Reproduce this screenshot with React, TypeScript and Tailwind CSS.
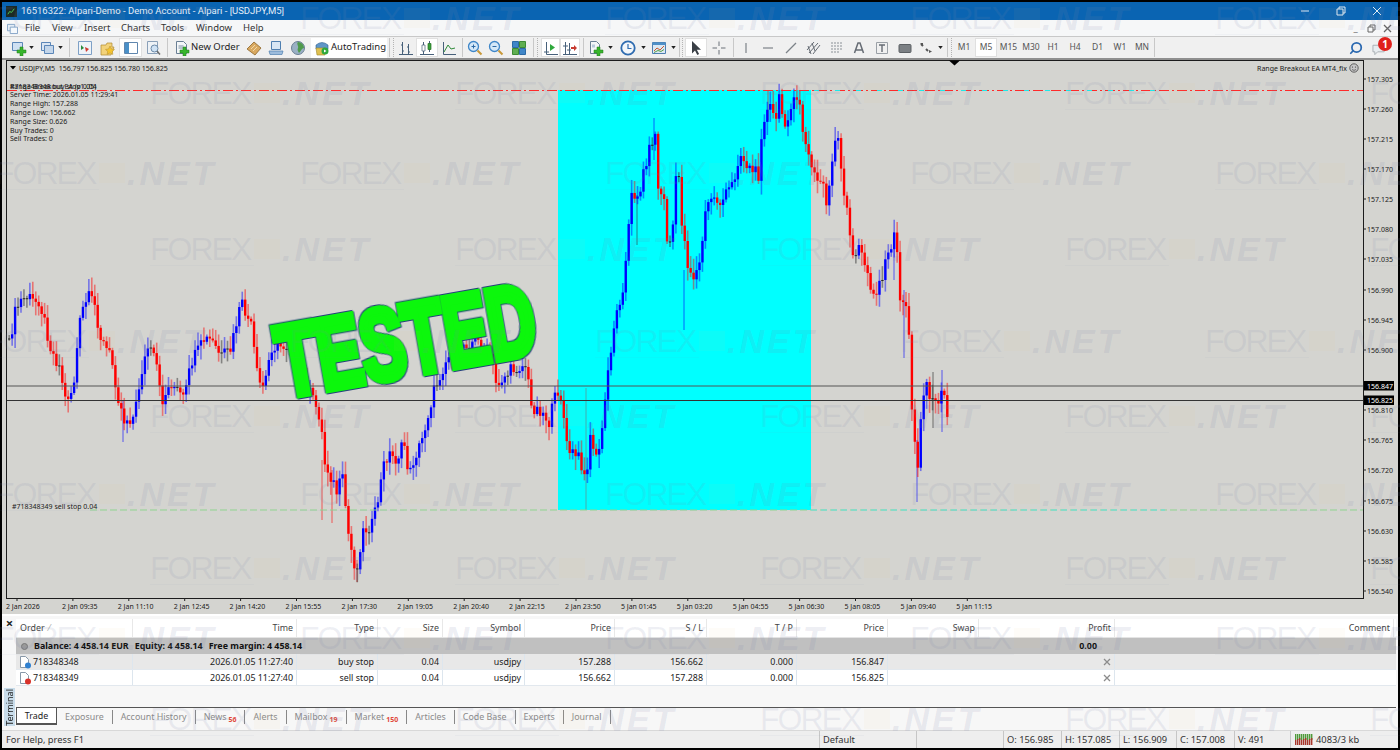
import type { ReactNode } from "react";
import { Search } from "lucide-react";

// close prices traced off the chart, in page pixels [x, y]
const path: [number, number][] = [
  [8, 345], [14, 312], [20, 300], [27, 297], [33, 302], [38, 300], [43, 320], [50, 350], [60, 370], [63, 400], [72, 390], [77, 337], [80, 313],
  [87, 297], [93, 303], [100, 340], [110, 357], [117, 397], [123, 420], [133, 417], [140, 373], [147, 347], [155, 363], [160, 403], [170, 383],
  [183, 400], [190, 363], [203, 340], [210, 340], [220, 357], [230, 350], [233, 333], [240, 303], [250, 327], [257, 383], [263, 387], [270, 347],
  [290, 345], [305, 385], [312, 400], [320, 420], [322, 460], [330, 477], [337, 497], [340, 470], [343, 493], [347, 533], [352, 560], [357, 573],
  [360, 533], [372, 523], [378, 493], [382, 467], [387, 453], [395, 460], [403, 443], [408, 477], [413, 458], [420, 443], [428, 410], [433, 390],
  [445, 360], [460, 345], [475, 340], [490, 355], [495, 385], [510, 370], [525, 365], [530, 407], [540, 410], [548, 423], [553, 400], [558, 387],
  [562, 413], [566, 450], [577, 457], [583, 470], [585, 490], [589, 430], [593, 460], [600, 443], [605, 387], [612, 330], [623, 280], [627, 233],
  [630, 197], [640, 190], [643, 167], [652, 137], [655, 135], [657, 187], [663, 202], [667, 253], [672, 223], [675, 177], [678, 177], [680, 217],
  [687, 267], [692, 277], [698, 267], [705, 208], [710, 197], [720, 203], [733, 180], [738, 153], [747, 167], [758, 175], [760, 135], [762, 120],
  [765, 113], [770, 107], [774, 123], [778, 100], [783, 122], [793, 103], [799, 103], [802, 135], [808, 160], [815, 180], [822, 183], [825, 202],
  [830, 177], [833, 142], [837, 143], [843, 200], [848, 217], [850, 253], [855, 258], [858, 247], [865, 267], [870, 287], [875, 295], [880, 277],
  [885, 263], [892, 237], [895, 237], [898, 293], [902, 303], [907, 307], [910, 407], [913, 433], [916, 483], [918, 422], [922, 400], [925, 377],
  [928, 400], [933, 400], [942, 395], [948, 420], [951, 400],
];

const rnd = (i: number) => {
  const v = Math.sin(i * 12.9898) * 43758.5453;
  return v - Math.floor(v);
};

function priceAt(x: number) {
  for (let i = 1; i < path.length; i++) {
    if (x <= path[i][0]) {
      const [x0, y0] = path[i - 1];
      const [x1, y1] = path[i];
      return y0 + ((y1 - y0) * (x - x0)) / (x1 - x0);
    }
  }
  return path[path.length - 1][1];
}

const jag = (i: number) => (rnd(i) - 0.5) * 13;

const candles = Array.from({ length: 319 }, (_, i) => {
  const x = 8 + i * 2.95;
  const close = priceAt(x) + jag(i);
  const open = i === 0 ? close : priceAt(x - 2.95) + jag(i - 1);
  const hi = Math.min(open, close) - 2 - rnd(i + 400) * 12;
  const lo = Math.max(open, close) + 2 + rnd(i + 800) * 12;
  return { x, open, close, hi, lo };
});

// the few long shadows which stand out in the picture
const longWicks: [number, number, number, string][] = [
  [123, 400, 442, "#0000ff"], [586, 388, 510, "#777777"], [684, 270, 330, "#0000ff"], [654, 118, 160, "#0000ff"], [637, 195, 245, "#333333"],
  [904, 290, 358, "#0000ff"], [917, 440, 502, "#0000ff"], [933, 372, 428, "#222222"], [942, 370, 432, "#0000ff"], [768, 90, 120, "#ff0000"],
  [322, 460, 520, "#ff0000"], [332, 470, 523, "#ff0000"], [357, 560, 582, "#ff0000"], [894, 232, 280, "#0000ff"],
];

const prices = [
  ["157.305", 79], ["157.260", 109], ["157.215", 139], ["157.170", 169], ["157.125", 199], ["157.080", 229], ["157.035", 259], ["156.990", 290],
  ["156.945", 320], ["156.900", 350], ["156.810", 410], ["156.765", 440], ["156.720", 470], ["156.675", 501], ["156.630", 531], ["156.585", 561], ["156.540", 591],
] as const;

const times = [
  "2 Jan 2026", "2 Jan 09:35", "2 Jan 11:10", "2 Jan 12:45", "2 Jan 14:20", "2 Jan 15:55", "2 Jan 17:30", "2 Jan 19:05", "2 Jan 20:40",
  "2 Jan 22:15", "2 Jan 23:50", "5 Jan 01:45", "5 Jan 03:20", "5 Jan 04:55", "5 Jan 06:30", "5 Jan 08:05", "5 Jan 09:40", "5 Jan 11:15",
];

const info = [
  ["Server Time: 2026.01.05 11:29:41", 97], ["Range High: 157.288", 106], ["Range Low: 156.662", 115],
  ["Range Size: 0.626", 124], ["Buy Trades: 0", 133], ["Sell Trades: 0", 141],
] as const;

function Chart() {
  return (
    <svg viewBox="2 60 1396 554" className="block w-[1396px] h-[554px]" fontFamily='"Noto Sans", sans-serif' fontSize="7" fill="#1a1a1a">
      <rect x="558" y="90" width="253" height="420" fill="#00ffff" />
      {longWicks.map(([x, a, b, c], i) => (
        <line key={i} x1={x} x2={x} y1={a} y2={b} stroke={c} strokeOpacity="0.6" />
      ))}
      {candles.map((c, i) => {
        const up = c.close < c.open;
        const flat = Math.abs(c.close - c.open) < 1;
        const color = flat ? "#222222" : up ? "#0000ff" : "#ff0000";
        return (
          <g key={i}>
            <line x1={c.x + 1.2} x2={c.x + 1.2} y1={c.hi} y2={c.lo} stroke={color} strokeOpacity="0.45" strokeWidth="1.600" />
            <rect x={c.x} y={Math.min(c.open, c.close)} width="2.400" height={Math.max(1, Math.abs(c.close - c.open))} fill={color} />
          </g>
        );
      })}
      <line x1="7" x2="1363" y1="386" y2="386" stroke="#555" />
      <line x1="7" x2="1363" y1="400.5" y2="400.5" stroke="#333" />
      <line x1="7" x2="1363" y1="90.5" y2="90.5" stroke="#ff2a2a" strokeDasharray="10 3 2 3" />
      <line x1="811" x2="1165" y1="90.5" y2="90.5" stroke="#22e6e6" strokeDasharray="5 16" strokeDashoffset="-3" />
      <line x1="90" x2="1363" y1="510" y2="510" stroke="#8fd48f" strokeDasharray="7 3" />
      <line x1="811" x2="1165" y1="510" y2="510" stroke="#60e0e0" strokeDasharray="6 4" />
      <rect x="6.5" y="60.5" width="1357" height="538" fill="none" stroke="#1c1c1c" />
      <path d="M10 66h6l-3 3.500z" fill="#000" />
      <path d="M949 60.500h11l-5.500 5z" fill="#000" />
      <text x="19" y="71">USDJPY,M5&nbsp; 156.797 156.825 156.780 156.825</text>
      <text x="10" y="88.500">#718348348 buy stop 0.04</text>
      <text x="10" y="88.500">Range Breakout EA (v1.05)</text>
      {info.map(([t, y]) => (
        <text key={t} x="10" y={y}>{t}</text>
      ))}
      <text x="12" y="509">#718348349 sell stop 0.04</text>
      <text x="1347" y="71" textAnchor="end">Range Breakout EA MT4_fix</text>
      <circle cx="1354" cy="68" r="4.200" fill="#c8c8c8" stroke="#444" strokeWidth="0.800" />
      <circle cx="1352.500" cy="67" r="0.600" fill="#333" />
      <circle cx="1355.500" cy="67" r="0.600" fill="#333" />
      <path d="M1352 69.500q2 1.800 4 0" fill="none" stroke="#333" strokeWidth="0.600" />
      {prices.map(([p, y]) => (
        <g key={p}>
          <line x1="1363" x2="1366" y1={y} y2={y} stroke="#222" />
          <text x="1367" y={y + 3}>{p}</text>
        </g>
      ))}
      <rect x="1364" y="381" width="30" height="9.500" fill="#000" />
      <text x="1367" y="388.500" fill="#fff">156.847</text>
      <rect x="1364" y="395.500" width="30" height="9.500" fill="#000" />
      <text x="1367" y="403" fill="#fff">156.825</text>
      {times.map((t, i) => {
        const x = 6 + i * 55.9;
        return (
          <g key={t}>
            <line x1={x + 11} x2={x + 11} y1="598" y2="601" stroke="#222" />
            <text x={x} y="609">{t}</text>
          </g>
        );
      })}
    </svg>
  );
}

const marks = [
  "h-[75px] ml-[-5px]", "h-[80px] ml-[150px]", "h-[76px] ml-[-5px]", "h-[92px] ml-[150px]", "h-[75px] ml-[-15px]",
  "h-[78px] ml-[150px]", "h-[74px] ml-[-5px]", "h-[70px] ml-[150px]", "h-[81px] ml-[-5px]", "h-[40px] ml-[150px]",
];

// the site's mark, tiled all over the picture
function Watermark() {
  return (
    <div className="absolute inset-0 z-30 pointer-events-none overflow-hidden pt-[2px] flex flex-col font-['Liberation_Sans',sans-serif]">
      {marks.map((m, r) => (
        <div key={r} className={`flex shrink-0 ${m}`}>
          {[0, 1, 2, 3, 4].map((c) => (
            <div key={c} className="flex items-center w-[305px] shrink-0 h-[32px]">
              <span className="w-[104px] text-[32px] leading-none tracking-[-2px] text-[#7c84a8]/12 border-b border-[#7c84a8]/5">FOREX</span>
              <span className="w-[26px] h-[20px] mr-[2px] bg-[#e6c070]/5" />
              <span className="text-[34px] leading-none font-bold italic tracking-[3px] text-[#7c84a8]/15">.NET</span>
            </div>
          ))}
        </div>
      ))}
    </div>
  );
}

function Tested() {
  return (
    <div className="absolute z-20 left-[142px] top-[230px] w-[524px] text-center text-[100px] leading-none font-bold text-[#0cf70c] font-['Liberation_Sans',sans-serif] [-webkit-text-stroke:8px_#0cf70c] [transform:rotate(-10deg)_scaleX(0.66)] [filter:drop-shadow(1px_1px_0_#24407c)_drop-shadow(-1px_-1px_0_#24407c)]">
      TESTED
    </div>
  );
}

const Ico = ({ children }: { children: ReactNode }) => (
  <svg viewBox="0 0 16 16" className="w-[16px] h-[16px]" fill="none">{children}</svg>
);

const Plus = () => <path d="M9 7h3v3h3v3h-3v3H9v-3H6v-3h3z" fill="#38b52c" stroke="#1e7a18" strokeWidth="0.500" />;
const Win = () => <path d="M1.500 2.500h10v8h-10z" fill="#cfe0f2" stroke="#5b86b8" />;

const icons = {
  newChart: <Ico><Win /><Plus /></Ico>,
  profiles: <Ico><path d="M1.500 2.500h9v8h-9z" fill="#dbe6f3" stroke="#5b86b8" /><path d="M4.500 5.500h9v8h-9z" fill="#c4d6ea" stroke="#5b86b8" /></Ico>,
  market: <Ico><path d="M1.500 1.500h13v13h-13z" fill="#eef3f8" stroke="#7ea0c6" /><path d="M4 5l3 3-3 2z" fill="#2a8a3a" /><path d="M8 7l4 2-3 3z" fill="#d03a30" /></Ico>,
  navigator: <Ico><path d="M1 5h5l1-2h5v4h2l-3 8H1z" fill="#f2d27a" stroke="#b08a30" strokeWidth="0.700" /><path d="M10 6l1.500 3 3 .4-2.200 2 .6 3-2.900-1.500-2.900 1.500.6-3-2.200-2 3-.4z" fill="#f4c430" stroke="#b08a30" strokeWidth="0.500" /></Ico>,
  panel: <Ico><path d="M1.500 2.500h13v11h-13z" fill="#fff" stroke="#5f86ae" /><path d="M2 3h4v10H2z" fill="#4a90c8" /></Ico>,
  tester: <Ico><path d="M2.500 1.500h10v12h-10z" fill="#eef2f6" stroke="#8aa0b8" /><circle cx="9.500" cy="8.500" r="3.500" fill="#cfe2f4" stroke="#6c8aa8" /><path d="M12 11l3 3.500" stroke="#6c6c6c" strokeWidth="1.500" /></Ico>,
  order: <Ico><path d="M2.500 1.500h7l3 3v9h-10z" fill="#f4f6f8" stroke="#6a7f94" /><path d="M4.500 6h5M4.500 8h5" stroke="#7c90a6" /><Plus /></Ico>,
  book: <Ico><path d="M1 9l7-7 7 6-6 7z" fill="#d8a860" stroke="#8c6428" strokeWidth="0.800" /><path d="M5 9l4-4M7 11l4-4" stroke="#f0d8a8" /></Ico>,
  monitor: <Ico><path d="M3.500 1.500h9v8h-9z" fill="#d8e6f4" stroke="#4f7fb0" /><path d="M1 11h14l-1 3.500H2z" fill="#9dbcdc" stroke="#4f7fb0" strokeWidth="0.700" /></Ico>,
  globe: <Ico><circle cx="8" cy="8" r="6.500" fill="#9ab0c4" stroke="#6a7f94" /><path d="M8 2a6 6 0 0 1 6 6c-2 0-3 3-5 5-1-2-2-3-1-5S6 4 8 2z" fill="#4f9a4c" /></Ico>,
  auto: <Ico><path d="M2 5q6-5 12 0v4H2z" fill="#5f96c8" stroke="#2d5f90" strokeWidth="0.600" /><path d="M2 8h9v7H3z" fill="#e0c050" stroke="#a08828" strokeWidth="0.600" /><circle cx="11" cy="11" r="3.500" fill="#2fa83c" /><path d="M10 9.500l2.500 1.500-2.500 1.500z" fill="#fff" /></Ico>,
  bars: <Ico><path d="M4.500 2v12M3 5h1.500M4.500 11H6M10.500 4v10M9 7h1.500M10.500 12H12M1 14.500h14" stroke="#47607a" /></Ico>,
  candle: <Ico><path d="M4.500 2v12M1 14.500h14M10.500 1v11" stroke="#47607a" /><path d="M3 5h3v6H3z" fill="#fff" stroke="#47607a" strokeWidth="0.700" /><path d="M9 3.500h3v6H9z" fill="#3aa03a" stroke="#267026" strokeWidth="0.700" /></Ico>,
  line: <Ico><path d="M2.500 2v12.500H15" stroke="#47607a" /><path d="M3 12l4-7 3 4 4-1" stroke="#2f8a3a" /></Ico>,
  zoomIn: <Ico><circle cx="6.500" cy="6.500" r="5" fill="#d4e8f8" stroke="#3f86c8" strokeWidth="1.300" /><path d="M4.500 6.500h4M6.500 4.500v4" stroke="#2d6aa6" /><path d="M10.500 10.500l4 4" stroke="#c89838" strokeWidth="2" /></Ico>,
  zoomOut: <Ico><circle cx="6.500" cy="6.500" r="5" fill="#d4e8f8" stroke="#3f86c8" strokeWidth="1.300" /><path d="M4.500 6.500h4" stroke="#2d6aa6" /><path d="M10.500 10.500l4 4" stroke="#c89838" strokeWidth="2" /></Ico>,
  tile: <Ico><path d="M1.500 1.500h6v6h-6z" fill="#3f86c8" stroke="#2d6aa6" /><path d="M8.500 1.500h6v6h-6z" fill="#5fae50" stroke="#3d8a34" /><path d="M1.500 8.500h6v6h-6z" fill="#5fae50" stroke="#3d8a34" /><path d="M8.500 8.500h6v6h-6z" fill="#3f86c8" stroke="#2d6aa6" /></Ico>,
  scroll: <Ico><path d="M3.500 2v12.500H15M1 12h5" stroke="#47607a" /><path d="M7 4l5 3.500L7 11z" fill="#2fa83c" /></Ico>,
  shift: <Ico><path d="M3.500 2v12M7.500 3v11M1 14.500h14M1 6h5M5 10h4" stroke="#47607a" /><path d="M9 7h3V5l3 3-3 3V9H9z" fill="#c83a30" /></Ico>,
  docPlus: <Ico><path d="M2.500 1.500h6l3 3v9h-9z" fill="#f4f6f8" stroke="#6a7f94" /><path d="M4 4.500h3v3H4z" fill="#b8cadc" /><Plus /></Ico>,
  clock: <Ico><circle cx="8" cy="8" r="6.700" fill="#f2f6fa" stroke="#2f6cb0" strokeWidth="1.800" /><path d="M8 4v4.500h3.500" stroke="#2f6cb0" strokeWidth="1.200" /></Ico>,
  template: <Ico><path d="M1.500 2.500h13v11h-13z" fill="#dbe8f4" stroke="#4f7fb0" /><path d="M1.500 2.500h13V5h-13z" fill="#4f90c8" /><path d="M3 11l3-3 3 2 4-4" stroke="#c85a30" /><path d="M3 12.500l4-2 3 1 3-2" stroke="#58a048" /></Ico>,
  cursor: <Ico><path d="M4 1v12.500l3-3 2.300 4.500 1.800-.9L8.800 9.700H13z" fill="#3a3f46" /></Ico>,
  cross: <Ico><path d="M8 1.500V6M8 10v4.500M1.500 8H6M10 8h4.500" stroke="#6a7078" /></Ico>,
  vline: <Ico><path d="M8 3v10" stroke="#7c8288" strokeWidth="1.200" /></Ico>,
  hline: <Ico><path d="M3 8h10" stroke="#7c8288" strokeWidth="1.200" /></Ico>,
  trend: <Ico><path d="M3 13L13 3" stroke="#7c8288" strokeWidth="1.200" /></Ico>,
  channel: <Ico><path d="M1 10l7-8M3 13l9-10M7 14l7-9M2 6l3 8M6 3l3 8" stroke="#666c74" /></Ico>,
  fibo: <Ico><path d="M2 3h12M2 6h12M2 9h12M2 12h8" stroke="#8a9096" strokeDasharray="2 1" /></Ico>,
  text: <Ico><path d="M3.500 13L7 3h2l3.500 10M5 10h6" stroke="#666c74" strokeWidth="1.500" /></Ico>,
  label: <Ico><path d="M2.500 2.500h11v11h-11z" stroke="#9aa0a6" /><path d="M5 5h6M8 5v7" stroke="#666c74" strokeWidth="1.400" /></Ico>,
  rect: <Ico><rect x="2" y="4.500" width="12" height="8" rx="1" fill="#7c8084" stroke="#5c6064" /></Ico>,
  arrows: <Ico><path d="M3 4l2 2M8 9l2 2" stroke="#555" strokeWidth="2" /><path d="M11 10l3 1.500-3 1.500z" fill="#555" /><path d="M2 3h3v3" fill="#555" /></Ico>,
};

const Btn = ({ w, on, children }: { w: string; on?: boolean; children?: ReactNode }) => (
  <div className={`${w} h-[19px] shrink-0 flex items-center justify-center ${on ? "bg-white border border-[#e0e0e0]" : ""}`}>{children}</div>
);
const Caret = ({ w = "w-[9px]" }: { w?: string }) => (
  <div className={`${w} shrink-0 flex justify-center`}>
    <svg viewBox="0 0 6 4" className="w-[5px] h-[3px]"><path d="M0 0h6L3 4z" fill="#222" /></svg>
  </div>
);
const Sep = ({ w = "w-[5px]" }: { w?: string }) => (
  <div className={`${w} h-[19px] shrink-0 flex justify-center`}><div className="w-px h-full bg-[#c8c8c8]" /></div>
);
const Grip = ({ w = "w-[6px]" }: { w?: string }) => (
  <div className={`${w} h-[19px] shrink-0 flex justify-center`}>
    <div className="w-[2px] h-full border-l border-dotted border-[#b4b4b4]" />
  </div>
);

const frames = ["M1", "M5", "M15", "M30", "H1", "H4", "D1", "W1", "MN"];

function Toolbar() {
  return (
    <div className="h-[24px] shrink-0 pl-[8px] pr-[5px] flex items-center bg-[#f0f0f0] border-t border-[#c8c8c8] border-b-2 border-b-[#8f8f8f] text-[9.500px]">
      <Btn w="w-[17px]">{icons.newChart}</Btn><Caret />
      <div className="w-[3px] shrink-0" />
      <Btn w="w-[17px]">{icons.profiles}</Btn><Caret />
      <Sep w="w-[9px]" />
      <Btn w="w-[22px]">{icons.market}</Btn>
      <Btn w="w-[23px]">{icons.navigator}</Btn>
      <Btn w="w-[23px]" on>{icons.panel}</Btn>
      <Btn w="w-[22px]">{icons.tester}</Btn>
      <Sep w="w-[6px]" />
      <div className="w-[73px] shrink-0 flex items-center gap-[1px] pl-[4px] text-[#222] whitespace-nowrap">{icons.order}<span>New Order</span></div>
      <Btn w="w-[22px]">{icons.book}</Btn>
      <Btn w="w-[22px]">{icons.monitor}</Btn>
      <Btn w="w-[22px]">{icons.globe}</Btn>
      <div className="w-[2px] shrink-0" />
      <div className="w-[76px] h-[20px] shrink-0 flex items-center gap-[1px] pl-[3px] bg-white text-[#222] whitespace-nowrap">{icons.auto}<span>AutoTrading</span></div>
      <Sep w="w-[4px]" /><Grip w="w-[5px]" />
      <Btn w="w-[20px]">{icons.bars}</Btn>
      <Btn w="w-[22px]" on>{icons.candle}</Btn>
      <Btn w="w-[22px]">{icons.line}</Btn>
      <Sep />
      <Btn w="w-[20px]">{icons.zoomIn}</Btn>
      <Btn w="w-[22px]">{icons.zoomOut}</Btn>
      <Btn w="w-[24px]">{icons.tile}</Btn>
      <Sep w="w-[4px]" /><Grip />
      <Btn w="w-[19px]" on>{icons.scroll}</Btn>
      <Btn w="w-[20px]" on>{icons.shift}</Btn>
      <Sep w="w-[7px]" />
      <Btn w="w-[17px]">{icons.docPlus}</Btn><Caret w="w-[13px]" />
      <Btn w="w-[22px]">{icons.clock}</Btn><Caret w="w-[8px]" />
      <div className="w-[2px] shrink-0" />
      <Btn w="w-[20px]">{icons.template}</Btn><Caret w="w-[8px]" />
      <Sep w="w-[4px]" /><Grip w="w-[4px]" />
      <Btn w="w-[22px]" on>{icons.cursor}</Btn>
      <Btn w="w-[24px]">{icons.cross}</Btn>
      <Sep w="w-[4px]" />
      <Btn w="w-[21px]">{icons.vline}</Btn>
      <Btn w="w-[23px]">{icons.hline}</Btn>
      <Btn w="w-[23px]">{icons.trend}</Btn>
      <Btn w="w-[23px]">{icons.channel}</Btn>
      <Btn w="w-[23px]">{icons.fibo}</Btn>
      <Btn w="w-[22px]">{icons.text}</Btn>
      <Btn w="w-[23px]">{icons.label}</Btn>
      <Btn w="w-[23px]">{icons.rect}</Btn>
      <Btn w="w-[20px]">{icons.arrows}</Btn><Caret w="w-[8px]" />
      <Sep w="w-[6px]" /><Grip w="w-[3px]" />
      {frames.map((f) => (
        <Btn key={f} w={f === "M15" || f === "D1" ? "w-[23px]" : "w-[22px]"} on={f === "M5"}>
          <span className="text-[8.500px] text-[#555]">{f}</span>
        </Btn>
      ))}
      <Sep w="w-[3px]" />
      <div className="flex-1" />
      <Search size={14} strokeWidth={3} className="text-[#2a68b0] -scale-x-100 mr-[9px]" />
      <div className="relative w-[20px] h-[16px] mr-[1px]">
        <svg viewBox="0 0 16 14" className="w-[15px] h-[14px] absolute left-0 top-[2px]"><path d="M1 3h12v7H6l-3 3v-3H1z" fill="#e8ecef" stroke="#a8adb2" /></svg>
        <div className="absolute left-[6px] top-[-3px] w-[14px] h-[14px] rounded-full bg-[#e0201c] text-white text-[10px] font-bold leading-[14px] text-center">1</div>
      </div>
    </div>
  );
}

const cols = "grid grid-cols-[117px_164px_81px_65px_82px_90px_92px_90px_91px_91px_136px_279px]";
const headers = ["Order", "Time", "Type", "Size", "Symbol", "Price", "S / L", "T / P", "Price", "Swap", "Profit", "Comment"];

const Cell = ({ children }: { children?: ReactNode }) => (
  <div className="pr-[3px] text-right border-r border-[#dde6ee] h-full leading-[15px]">{children}</div>
);

const Close = () => (
  <svg viewBox="0 0 8 8" className="w-[8px] h-[8px] ml-auto mr-[3px] mt-[4px]"><path d="M1 1l6 6M7 1L1 7" stroke="#8c8c8c" strokeWidth="1.300" /></svg>
);

function OrderRow({ id, type, price, sl, now, color, bg }: { id: string; type: string; price: string; sl: string; now: string; color: string; bg: string }) {
  return (
    <div className={`${cols} h-[16px] border-b border-[#e2e8ee] ${bg}`}>
      <div className="flex items-center gap-[1px] pl-[2px] border-r border-[#dde6ee]">
        <svg viewBox="0 0 14 14" className="w-[14px] h-[14px]">
          <path d="M2.500 1.500h5l3 3v8h-8z" fill="#fff" stroke="#8898a8" />
          <circle cx="10" cy="10.500" r="3" fill={color} />
        </svg>
        <span>{id}</span>
      </div>
      <Cell>2026.01.05 11:27:40</Cell>
      <Cell>{type}</Cell>
      <Cell>0.04</Cell>
      <Cell>usdjpy</Cell>
      <Cell>{price}</Cell>
      <Cell>{sl}</Cell>
      <Cell>0.000</Cell>
      <Cell>{now}</Cell>
      <div />
      <div className="border-r border-[#dde6ee]"><Close /></div>
      <div />
    </div>
  );
}

const tabs: [string, string?][] = [
  ["Exposure"], ["Account History"], ["News", "56"], ["Alerts"], ["Mailbox", "19"], ["Market", "150"], ["Articles"], ["Code Base"], ["Experts"], ["Journal"],
];

function Terminal() {
  return (
    <div className="h-[116px] shrink-0 bg-[#f7f7f7] flex text-[8.900px] text-[#222] border-t-2 border-white">
      <div className="w-[14px] shrink-0 flex flex-col items-center pl-[1px]">
        <span className="text-[13px] font-bold leading-[14px] text-[#222]">×</span>
        <div className="flex-1" />
        <div className="w-[11px] h-[38px] mb-[4px] bg-[#c8dcea] flex items-center justify-center">
          <span className="[writing-mode:vertical-rl] rotate-180 text-[9px] leading-none">Terminal</span>
        </div>
      </div>
      <div className="flex-1 flex flex-col pr-[2px]">
        <div className={`${cols} h-[19px] mt-[3px] bg-white border-b border-[#e4e4e4] text-[#444]`}>
          <div className="pl-[4px] leading-[18px] border-r border-[#e8e8e8]">Order <span className="text-[#aaa] ml-[2px]">⁄</span></div>
          {headers.slice(1).map((h, i) => (
            <div key={i} className="pr-[3px] text-right leading-[18px] border-r border-[#e8e8e8]">{h}</div>
          ))}
        </div>
        <div className={`${cols} h-[16px] bg-[#c0c0c0] font-bold text-[#111] leading-[16px]`}>
          <div className="col-span-5 flex items-center gap-[6px] pl-[5px]">
            <span className="w-[7px] h-[7px] rounded-full bg-[#9a9a9a] border border-[#777]" />
            <span>Balance: 4 458.14 EUR</span><span>Equity: 4 458.14</span><span>Free margin: 4 458.14</span>
          </div>
          <div className="col-span-6 pr-[18px] text-right">0.00</div>
        </div>
        <OrderRow id="718348348" type="buy stop" price="157.288" sl="156.662" now="156.847" color="#2f80d0" bg="bg-[#e8e8e8]" />
        <OrderRow id="718348349" type="sell stop" price="156.662" sl="157.288" now="156.825" color="#d8322a" bg="bg-white" />
        <div className="flex-1" />
        <div className="h-[21px] mb-[2px] border-t border-[#555] flex items-start text-[#8a8a8a]">
          <div className="w-[41px] h-[17px] bg-white border-x border-b-2 border-[#555] text-[#222] text-center leading-[16px]">Trade</div>
          {tabs.map(([t, n]) => (
            <div key={t} className="h-[14px] mt-[2px] px-[8px] flex items-end leading-[14px] border-r border-[#888] whitespace-nowrap">
              <span>{t}</span>
              {n && <span className="ml-[2px] text-[7px] leading-[8px] font-bold text-[#e04a3c]">{n}</span>}
            </div>
          ))}
        </div>
      </div>
    </div>
  );
}

const StatusCell = ({ w, children }: { w: string; children?: ReactNode }) => (
  <div className={`${w} shrink-0 h-full pl-[3px] border-r border-[#c6c6c6] flex items-center whitespace-nowrap`}>{children}</div>
);

function StatusBar() {
  return (
    <div className="h-[18px] shrink-0 flex bg-[#eeeeee] border-t border-[#d8d8d8] text-[9.300px] text-[#333]">
      <StatusCell w="w-[818px]"><span className="pl-[1px]">For Help, press F1</span></StatusCell>
      <StatusCell w="w-[97px]">Default</StatusCell>
      <div className="w-[87px] shrink-0 h-full border-r border-[#c6c6c6]" />
      <StatusCell w="w-[58px]">O: 156.985</StatusCell>
      <StatusCell w="w-[58px]">H: 157.085</StatusCell>
      <StatusCell w="w-[57px]">L: 156.909</StatusCell>
      <StatusCell w="w-[58px]">C: 157.008</StatusCell>
      <StatusCell w="w-[56px]">V: 491</StatusCell>
      <div className="flex items-center gap-[3px] pl-[4px]">
        <svg viewBox="0 0 18 11" className="w-[18px] h-[11px]">
          {[...Array(9)].map((_, i) => (
            <g key={i}>
              <rect x={i * 2} y="0" width="1.400" height="6" fill="#4e9a3a" />
              <rect x={i * 2} y={6 - (i % 3)} width="1.400" height={5 + (i % 3)} fill="#a8372c" />
            </g>
          ))}
        </svg>
        <span>4083/3 kb</span>
      </div>
    </div>
  );
}

export default function App() {
  return (
    <div className="relative w-[1400px] h-[750px] overflow-hidden bg-black p-[2px] flex flex-col font-['Noto_Sans',sans-serif]">
      <div className="h-[18px] shrink-0 flex items-center bg-[#0a64b2] text-white text-[9.500px] pl-[4px] font-['Roboto',sans-serif]">
        <svg viewBox="0 0 12 12" className="w-[11px] h-[11px] mr-[4px]">
          <rect width="12" height="12" fill="#1c2a26" />
          <path d="M2 9l2-3 2 1 3-4" stroke="#4fd05a" fill="none" />
        </svg>
        <span className="text-[#e4eef8]">16516322: Alpari-Demo - Demo Account - Alpari - [USDJPY,M5]</span>
        <div className="flex-1" />
        <svg viewBox="0 0 80 10" className="w-[80px] h-[10px] mr-[17px]" stroke="#dfeaf4" fill="none">
          <path d="M0 5h8" />
          <path d="M36 3h6v6h-6zM38 3V1h6v6h-2" />
          <path d="M72 1l8 8M80 1l-8 8" />
        </svg>
      </div>
      <div className="h-[16px] shrink-0 flex items-center bg-[#f6f7f8] text-[9.500px] text-[#333]">
        <svg viewBox="0 0 12 12" className="w-[11px] h-[11px] ml-[5px] mr-[7px]">
          <path d="M.5 1.500h8v7h-8z" fill="#e4edf6" stroke="#7fa0c4" />
          <path d="M3.500 4.500h8v7h-8z" fill="#f4f8fc" stroke="#7fa0c4" />
        </svg>
        <span className="w-[27px]">File</span>
        <span className="w-[32px]">View</span>
        <span className="w-[37px]">Insert</span>
        <span className="w-[40px]">Charts</span>
        <span className="w-[35px]">Tools</span>
        <span className="w-[47px]">Window</span>
        <span>Help</span>
        <div className="flex-1" />
        <div className="flex items-center gap-[7px] pr-[6px] text-[#666]">
          <span className="w-[9px] text-center">_</span>
          <svg viewBox="0 0 9 9" className="w-[9px] h-[9px]" stroke="#666" fill="none"><path d="M1 3h5v5H1zM3 3V1h5v5H6" /></svg>
          <svg viewBox="0 0 9 9" className="w-[9px] h-[9px]" stroke="#666"><path d="M1 1l7 7M8 1L1 8" strokeWidth="1.300" /></svg>
        </div>
      </div>
      <Toolbar />
      <div className="relative h-[554px] shrink-0 bg-[#d4d4d0]">
        <Chart />
        <Tested />
      </div>
      <Terminal />
      <StatusBar />
      <Watermark />
    </div>
  );
}
